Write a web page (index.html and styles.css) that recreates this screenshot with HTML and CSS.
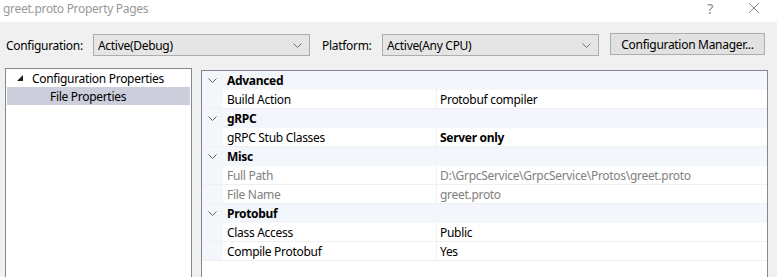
FILE: index.html
```html
<!DOCTYPE html>
<html>
<head>
<meta charset="utf-8">
<link rel="stylesheet" href="styles.css">
</head>
<body>
<div class="window">
  <div class="titlebar">
    <span class="title">greet.proto Property Pages</span>
    <span class="tb-help">?</span>
    <svg class="tb-close" width="12" height="12" viewBox="0 0 12 12"><path d="M1 1 L11 11 M11 1 L1 11" stroke="#8a8a8a" stroke-width="1" fill="none"/></svg>
  </div>
  <div class="toolbar">
    <span class="label">Configuration:</span>
    <div class="combo">
      <span>Active(Debug)</span>
      <svg class="combo-arrow" width="9" height="5" viewBox="0 0 9 5"><path d="M0.5 0.5 L4.5 4.5 L8.5 0.5" stroke="#707070" fill="none"/></svg>
    </div>
    <span class="label platform">Platform:</span>
    <div class="combo">
      <span>Active(Any CPU)</span>
      <svg class="combo-arrow" width="9" height="5" viewBox="0 0 9 5"><path d="M0.5 0.5 L4.5 4.5 L8.5 0.5" stroke="#707070" fill="none"/></svg>
    </div>
    <div class="button">Configuration Manager...</div>
  </div>
  <div class="main">
    <div class="tree">
      <div class="tree-item root">
        <svg class="tree-tri" width="6" height="6" viewBox="0 0 6 6"><path d="M6 0 L6 6 L0 6 Z" fill="#1e1e1e"/></svg>
        <span>Configuration Properties</span>
      </div>
      <div class="tree-item child selected"><span>File Properties</span></div>
    </div>
    <div class="grid">
      <div class="row cat"><span class="gutter"><svg width="9" height="5" viewBox="0 0 9 5"><path d="M0.5 0.5 L4.5 4.5 L8.5 0.5" stroke="#606060" fill="none"/></svg></span><span class="cat-name">Advanced</span></div>
      <div class="row"><span class="gutter"></span><span class="name">Build Action</span><span class="value">Protobuf compiler</span></div>
      <div class="row cat"><span class="gutter"><svg width="9" height="5" viewBox="0 0 9 5"><path d="M0.5 0.5 L4.5 4.5 L8.5 0.5" stroke="#606060" fill="none"/></svg></span><span class="cat-name">gRPC</span></div>
      <div class="row"><span class="gutter"></span><span class="name">gRPC Stub Classes</span><span class="value bold">Server only</span></div>
      <div class="row cat"><span class="gutter"><svg width="9" height="5" viewBox="0 0 9 5"><path d="M0.5 0.5 L4.5 4.5 L8.5 0.5" stroke="#606060" fill="none"/></svg></span><span class="cat-name">Misc</span></div>
      <div class="row disabled"><span class="gutter"></span><span class="name">Full Path</span><span class="value">D:\GrpcService\GrpcService\Protos\greet.proto</span></div>
      <div class="row disabled"><span class="gutter"></span><span class="name">File Name</span><span class="value">greet.proto</span></div>
      <div class="row cat"><span class="gutter"><svg width="9" height="5" viewBox="0 0 9 5"><path d="M0.5 0.5 L4.5 4.5 L8.5 0.5" stroke="#606060" fill="none"/></svg></span><span class="cat-name">Protobuf</span></div>
      <div class="row"><span class="gutter"></span><span class="name">Class Access</span><span class="value">Public</span></div>
      <div class="row"><span class="gutter"></span><span class="name">Compile Protobuf</span><span class="value">Yes</span></div>
    </div>
  </div>
</div>
</body>
</html>
```
FILE: styles.css
```css
html, body {
  margin: 0;
  padding: 0;
}
body {
  width: 777px;
  height: 277px;
  overflow: hidden;
  background: #f0f0f0;
  font-family: "Noto Sans", "Open Sans", sans-serif;
  font-size: 12px;
  letter-spacing: -0.3px;
  color: #000;
}
.window {
  width: 777px;
  height: 277px;
  display: flex;
  flex-direction: column;
  overflow: hidden;
}
.titlebar {
  height: 22px;
  background: #fff;
  display: flex;
  align-items: center;
  padding-left: 3px;
  flex-shrink: 0;
}
.title {
  color: #999;
  flex: 1;
  margin-top: -6px;
}
.tb-help {
  color: #8a8a8a;
  font-size: 14px;
  margin-right: 35px;
  margin-top: -6px;
}
.tb-close {
  margin-right: 17px;
  margin-top: -6px;
}
.toolbar {
  display: flex;
  align-items: center;
  height: 22px;
  margin-top: 12px;
  padding-left: 6px;
  flex-shrink: 0;
}
.label {
  width: 87px;
}
.label.platform {
  width: 60px;
  margin-left: 12px;
}
.combo {
  box-sizing: border-box;
  width: 217px;
  height: 22px;
  border: 1px solid #adadad;
  background: #e5e5e5;
  display: flex;
  align-items: center;
  padding-left: 4px;
  padding-right: 7px;
}
.combo span {
  flex: 1;
}
.button {
  box-sizing: border-box;
  width: 155px;
  height: 22px;
  margin-left: 11px;
  margin-top: -2px;
  border: 1px solid #adadad;
  background: #e1e1e1;
  display: flex;
  align-items: center;
  justify-content: center;
}
.main {
  display: flex;
  align-items: flex-start;
  margin-top: 12px;
  padding-left: 5px;
  height: 209px;
  flex-shrink: 0;
}
.tree {
  box-sizing: border-box;
  width: 187px;
  height: 210px;
  border: 1px solid #828790;
  background: #fff;
  padding: 0 1px;
}
.tree-item {
  height: 18px;
  display: flex;
  align-items: center;
}
.tree-item.root {
  padding-left: 10px;
}
.tree-tri {
  margin-right: 9px;
}
.tree-item.child {
  padding-left: 43px;
}
.tree-item.selected {
  background: #cccedb;
}
.grid {
  box-sizing: border-box;
  width: 567px;
  height: 208px;
  margin-left: 9px;
  margin-top: 2px;
  border: 1px solid #828790;
  border-bottom: none;
  background: #fff;
}
.row {
  display: flex;
  height: 19px;
  box-sizing: border-box;
  border-bottom: 1px solid #f0f0f0;
  align-items: stretch;
}
.gutter {
  width: 21px;
  flex-shrink: 0;
  background: #f3f6fb;
  display: flex;
  align-items: center;
  justify-content: center;
}
.row.cat {
  background: #f3f6fb;
  border-bottom-color: #f3f6fb;
}
.cat-name {
  font-weight: bold;
  padding-left: 4px;
  display: flex;
  align-items: center;
}
.name {
  width: 214px;
  box-sizing: border-box;
  padding-left: 4px;
  border-right: 1px solid #f0f0f0;
  display: flex;
  align-items: center;
}
.value {
  padding-left: 3px;
  display: flex;
  align-items: center;
}
.value.bold {
  font-weight: bold;
}
.row.disabled .name,
.row.disabled .value {
  color: #808080;
}
```
